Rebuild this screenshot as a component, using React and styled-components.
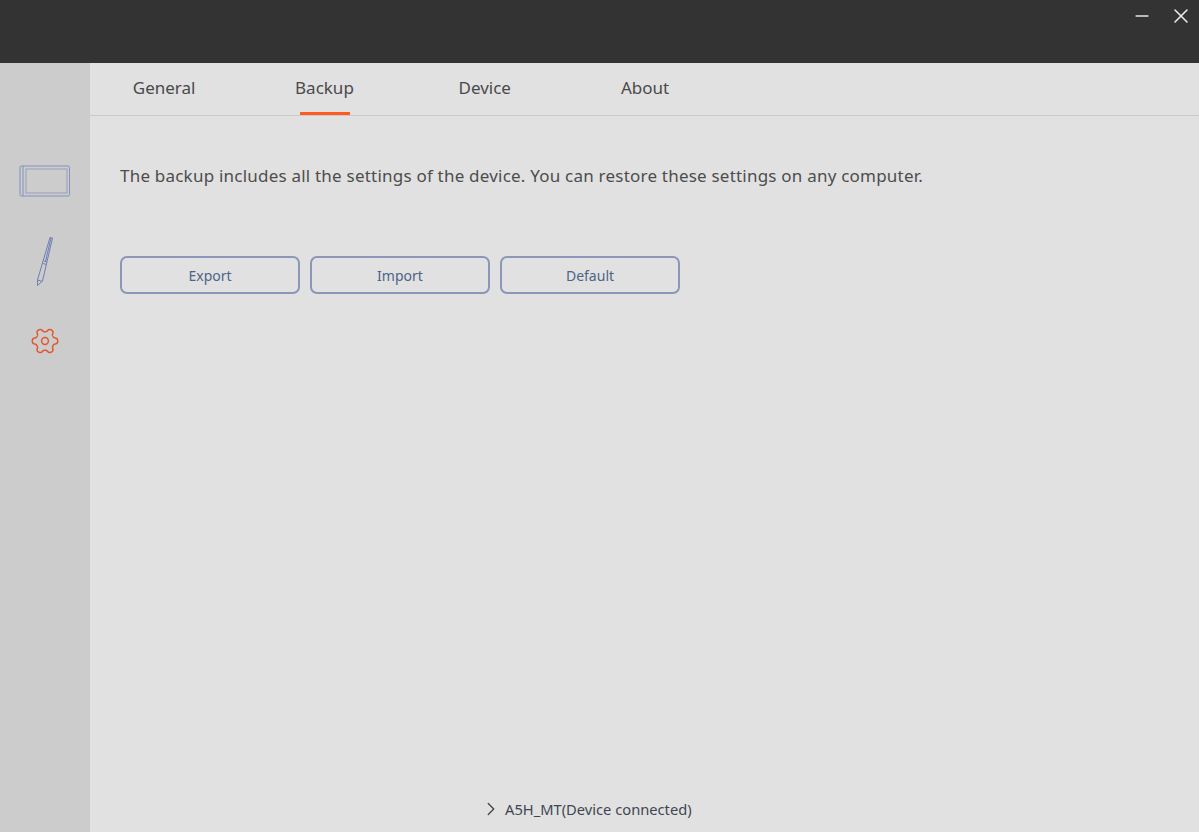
import React from "react";
import styled, { createGlobalStyle } from "styled-components";
import { ChevronRight, Minus, X } from "lucide-react";

const GlobalStyle = createGlobalStyle`
  html, body {
    margin: 0;
    padding: 0;
    height: 100%;
    overflow: hidden;
    background: #e1e1e1;
    font-family: "Noto Sans", "Open Sans", "Liberation Sans", sans-serif;
  }
  #root { height: 100%; }
`;

const Window = styled.div`
  display: flex;
  flex-direction: column;
  height: 832px;
`;

const TitleBar = styled.header`
  height: 63px;
  flex: none;
  background: #333333;
  display: flex;
  justify-content: flex-end;
  align-items: flex-start;
  padding: 4px 6px 0 0;
  gap: 15px;
  box-sizing: border-box;
  color: #e8e8e8;
`;

const WinButton = styled.button`
  width: 24px;
  height: 24px;
  padding: 0;
  border: 0;
  background: none;
  color: inherit;
  display: flex;
  align-items: center;
  justify-content: center;
`;

const Body = styled.div`
  flex: 1;
  display: flex;
  min-height: 0;
`;

const Sidebar = styled.nav`
  width: 90px;
  flex: none;
  background: #cccccc;
  display: flex;
  flex-direction: column;
  align-items: center;
  padding-top: 102px;
  box-sizing: border-box;
`;

const SideItem = styled.div`
  height: ${(props) => props.height}px;
  display: flex;
  align-items: flex-start;
  justify-content: center;
`;

const Main = styled.main`
  flex: 1;
  display: flex;
  flex-direction: column;
  min-width: 0;
`;

const Tabs = styled.div`
  height: 52px;
  flex: none;
  display: flex;
  gap: 12px;
  border-bottom: 1px solid #c8c8c8;
`;

const Tab = styled.div`
  position: relative;
  width: 148.3px;
  padding-top: 12px;
  text-align: center;
  font-size: 17px;
  line-height: 25px;
  color: #4a4a4a;

  ${(props) =>
    props.active &&
    `&::after {
      content: "";
      position: absolute;
      left: 50%;
      bottom: 0;
      width: 50px;
      height: 3px;
      margin-left: -24px;
      background: #ff5a1f;
    }`}
`;

const Content = styled.section`
  flex: 1;
  padding: 48px 30px 0;
`;

const Description = styled.p`
  margin: 0 0 68px;
  font-size: 17px;
  letter-spacing: 0.215px;
  line-height: 24px;
  color: #4d4d4d;
`;

const Buttons = styled.div`
  display: flex;
  gap: 10px;
`;

const ActionButton = styled.button`
  width: 180px;
  height: 38px;
  box-sizing: border-box;
  border: 2px solid #8c96b8;
  border-radius: 7px;
  background: transparent;
  font-family: inherit;
  font-size: 14px;
  color: #4d6488;
  padding: 0;
`;

const StatusBar = styled.footer`
  height: 44px;
  flex: none;
  display: flex;
  align-items: flex-start;
  padding: 11px 0 0 390px;
  box-sizing: border-box;
  font-size: 14.7px;
  line-height: 20px;
  color: #3f4652;
`;

const StatusArrow = styled.span`
  width: 25px;
  height: 20px;
  margin-left: -4px;
  padding-left: 4px;
  display: flex;
  align-items: center;
  color: #444444;
`;

const TabletIcon = () => (
  <svg width="52" height="32" viewBox="0 0 52 32" fill="none">
    <rect x="1" y="1" width="49.5" height="30" rx="1.500" stroke="#8490bf" strokeWidth="1" />
    <path d="M4 1v30" stroke="#8490bf" strokeWidth="1" />
    <rect x="7" y="4" width="41" height="24" stroke="#969fba" strokeWidth="1" />
  </svg>
);

const PenIcon = () => (
  <svg width="18" height="50" viewBox="0 0 18 50" fill="none" stroke="#6f7db4" strokeWidth="1">
    <path d="M14 .5l2.500.5-10 43-5 4.500v-5.500z" />
    <path d="M15 1l-5.500 23.500M8 24l2.800 1M7.300 26.500l2.900 1M1.500 43l5 1.500" />
  </svg>
);

// six flat teeth around the ring, with a notch at the top like the original glyph
const gearPath = Array.from({ length: 181 }, (_, i) => {
  const t = (i / 180) * Math.PI * 2;
  const r = 11 + (1.7 * Math.tanh(1.8 * Math.cos(6 * t))) / Math.tanh(1.8);
  const x = 14 + r * Math.cos(t);
  const y = 14 + r * Math.sin(t);
  return `${i ? "L" : "M"}${x.toFixed(2)} ${y.toFixed(2)}`;
}).join("") + "Z";

const GearIcon = () => (
  <svg width="28" height="28" viewBox="0 0 28 28" fill="none" stroke="#e2572b" strokeWidth="1.500">
    <path d={gearPath} />
    <circle cx="14" cy="14" r="3.400" />
  </svg>
);

const App = () => (
  <>
    <GlobalStyle />
    <Window>
      <TitleBar>
        <WinButton aria-label="Minimize">
          <Minus size={20} strokeWidth={1.9} />
        </WinButton>
        <WinButton aria-label="Close">
          <X size={24} strokeWidth={1.6} />
        </WinButton>
      </TitleBar>
      <Body>
        <Sidebar>
          <SideItem height={72}>
            <TabletIcon />
          </SideItem>
          <SideItem height={90}>
            <PenIcon />
          </SideItem>
          <SideItem height={40}>
            <GearIcon />
          </SideItem>
        </Sidebar>
        <Main>
          <Tabs>
            <Tab>General</Tab>
            <Tab active>Backup</Tab>
            <Tab>Device</Tab>
            <Tab>About</Tab>
          </Tabs>
          <Content>
            <Description>
              The backup includes all the settings of the device. You can restore these settings on any computer.
            </Description>
            <Buttons>
              <ActionButton>Export</ActionButton>
              <ActionButton>Import</ActionButton>
              <ActionButton>Default</ActionButton>
            </Buttons>
          </Content>
          <StatusBar>
            <StatusArrow>
              <ChevronRight size={22} strokeWidth={1.4} />
            </StatusArrow>
            A5H_MT(Device connected)
          </StatusBar>
        </Main>
      </Body>
    </Window>
  </>
);

export default App;
